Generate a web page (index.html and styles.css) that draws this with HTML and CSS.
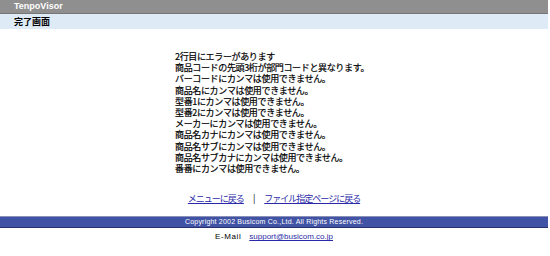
FILE: index.html
```html
<!DOCTYPE html>
<html lang="ja">
<head>
<meta charset="utf-8">
<title>TenpoVisor</title>
<link rel="stylesheet" href="styles.css">
</head>
<body>
<div class="page">
  <div class="appbar">TenpoVisor</div>
  <div class="titlebar">完了画面</div>
  <div class="messages">
    <div class="msg-list">
      <div>2行目にエラーがあります</div>
      <div>商品コードの先頭3桁が部門コードと異なります。</div>
      <div>バーコードにカンマは使用できません。</div>
      <div>商品名にカンマは使用できません。</div>
      <div>型番1にカンマは使用できません。</div>
      <div>型番2にカンマは使用できません。</div>
      <div>メーカーにカンマは使用できません。</div>
      <div>商品名カナにカンマは使用できません。</div>
      <div>商品名サブにカンマは使用できません。</div>
      <div>商品名サブカナにカンマは使用できません。</div>
      <div>番番にカンマは使用できません。</div>
    </div>
  </div>
  <div class="navlinks">
    <a href="#">メニューに戻る</a>
    <span class="sep">|</span>
    <a href="#">ファイル指定ページに戻る</a>
  </div>
  <div class="footer">Copyright 2002 Busicom Co.,Ltd. All Rights Reserved.</div>
  <div class="contact">
    <span class="label">E-Mail</span>
    <a href="#">support@busicom.co.jp</a>
  </div>
</div>
</body>
</html>
```
FILE: styles.css
```css
html, body {
  margin: 0;
  padding: 0;
  background: #ffffff;
}
body {
  font-family: "Noto Sans CJK JP", "Liberation Sans", sans-serif;
  color: #000000;
}
.page {
  width: 548px;
  display: flex;
  flex-direction: column;
}
.appbar {
  height: 14px;
  box-sizing: border-box;
  background: #8f8f8f;
  border-bottom: 1px solid #767676;
  color: #ffffff;
  font-family: "Liberation Sans", sans-serif;
  font-weight: bold;
  font-size: 9px;
  line-height: 13px;
  padding-left: 14px;
}
.titlebar {
  height: 15px;
  background: #deebf7;
  font-weight: bold;
  font-size: 9px;
  line-height: 15px;
  padding-left: 14px;
}
.messages {
  display: flex;
  justify-content: center;
  margin-top: 22px;
}
.msg-list {
  width: 196px;
  white-space: nowrap;
  font-size: 9px;
  line-height: 11.2px;
  letter-spacing: -0.35px;
  -webkit-text-stroke: 0.2px #000000;
  transform: translateX(-1px);
}
.navlinks {
  display: flex;
  justify-content: center;
  align-items: center;
  gap: 9px;
  margin-top: 19px;
  height: 11px;
  font-size: 9px;
  line-height: 11px;
  letter-spacing: -1px;
}
.navlinks a, .contact a {
  color: #2a2aa8;
  text-decoration: underline;
}
.navlinks .sep {
  letter-spacing: 0;
}
.footer {
  margin-top: 12px;
  height: 12px;
  box-sizing: border-box;
  background: #4153a5;
  border-top: 1px solid #8a90b8;
  border-bottom: 1px solid #28306e;
  color: #ffffff;
  font-family: "Liberation Sans", sans-serif;
  font-size: 7px;
  line-height: 10px;
  text-align: center;
  letter-spacing: 0.2px;
}
.contact {
  display: flex;
  justify-content: center;
  gap: 8px;
  margin-top: 3px;
  font-family: "Liberation Sans", sans-serif;
  font-size: 8px;
  line-height: 12px;
}
.contact .label {
  letter-spacing: 0.6px;
}
```
